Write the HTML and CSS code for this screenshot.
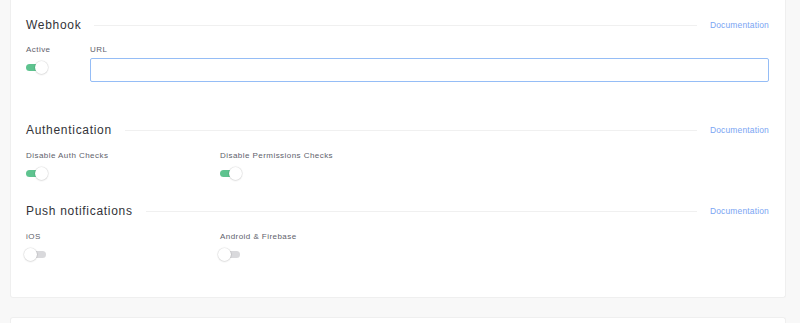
FILE: index.html
```html
<!DOCTYPE html>
<html>
<head>
<meta charset="utf-8">
<link rel="stylesheet" href="styles.css">
</head>
<body>
<div class="page">
  <div class="card card-top">
    <section class="section">
      <div class="section-head">
        <h2 class="section-title">Webhook</h2>
        <div class="section-line"></div>
        <a class="doc-link" href="#">Documentation</a>
      </div>
      <div class="webhook-row">
        <div class="field field-active">
          <div class="field-label">Active</div>
          <div class="toggle toggle-on"><span class="knob"></span></div>
        </div>
        <div class="field field-url">
          <div class="field-label">URL</div>
          <input class="text-input" type="text">
        </div>
      </div>
    </section>

    <section class="section section-auth">
      <div class="section-head">
        <h2 class="section-title">Authentication</h2>
        <div class="section-line"></div>
        <a class="doc-link" href="#">Documentation</a>
      </div>
      <div class="toggle-grid">
        <div class="field">
          <div class="field-label">Disable Auth Checks</div>
          <div class="toggle toggle-on"><span class="knob"></span></div>
        </div>
        <div class="field">
          <div class="field-label">Disable Permissions Checks</div>
          <div class="toggle toggle-on"><span class="knob"></span></div>
        </div>
      </div>
    </section>

    <section class="section section-push">
      <div class="section-head">
        <h2 class="section-title">Push notifications</h2>
        <div class="section-line"></div>
        <a class="doc-link" href="#">Documentation</a>
      </div>
      <div class="toggle-grid">
        <div class="field">
          <div class="field-label">iOS</div>
          <div class="toggle"><span class="knob"></span></div>
        </div>
        <div class="field">
          <div class="field-label">Android &amp; Firebase</div>
          <div class="toggle"><span class="knob"></span></div>
        </div>
      </div>
    </section>
  </div>
  <div class="card card-next"></div>
</div>
</body>
</html>
```
FILE: styles.css
```css
* { box-sizing: border-box; }
html, body {
  margin: 0;
  padding: 0;
  background: #f8f8f8;
  font-family: "Liberation Sans", Arial, sans-serif;
  overflow: hidden;
}
.page {
  width: 800px;
  height: 323px;
  padding: 0 14px 0 10px;
  overflow: hidden;
}
.card {
  background: #ffffff;
  border: 1px solid #efefef;
  border-radius: 3px;
}
.card-top {
  border-top: none;
  border-radius: 0 0 3px 3px;
  height: 298px;
  padding: 17px 16px 0 15px;
}
.card-next {
  margin-top: 19px;
  height: 6px;
  border-bottom: none;
  border-radius: 3px 3px 0 0;
}
.section-head {
  display: flex;
  align-items: center;
  height: 16px;
}
.section-title {
  margin: 0;
  font-size: 12px;
  font-weight: normal;
  letter-spacing: 0.7px;
  color: #333338;
  white-space: nowrap;
}
.section-line {
  flex: 1;
  height: 1px;
  background: #f0f0f0;
  margin: 0 13px;
}
.doc-link {
  font-size: 8.5px;
  letter-spacing: 0.15px;
  color: #7aa5f3;
  text-decoration: none;
  white-space: nowrap;
}
.webhook-row {
  display: flex;
  margin-top: 11px;
}
.field-label {
  font-size: 8px;
  line-height: 12px;
  letter-spacing: 0.45px;
  color: #5e616b;
  white-space: nowrap;
}
.field-active { width: 64px; }
.field-url { flex: 1; }
.text-input {
  display: block;
  margin-top: 2px;
  width: 100%;
  height: 24px;
  border: 1px solid #95bdf6;
  border-radius: 2px;
  outline: none;
  background: #fff;
}
.toggle {
  position: relative;
  width: 20px;
  height: 7px;
  margin-top: 8px;
  border-radius: 4px;
  background: #d9d9dc;
}
.toggle-on { background: #5ec38f; }
.knob {
  position: absolute;
  top: -3px;
  left: -2px;
  width: 13px;
  height: 13px;
  border-radius: 50%;
  background: #ffffff;
  box-shadow: 0 0 1px 0.5px rgba(0,0,0,0.12), 0 1px 2px rgba(0,0,0,0.08);
}
.toggle-on .knob { left: 9px; }
.section-auth { margin-top: 40px; }
.section-push { margin-top: 26px; }
.toggle-grid {
  display: grid;
  grid-template-columns: 194px 194px;
  margin-top: 12px;
}
```
